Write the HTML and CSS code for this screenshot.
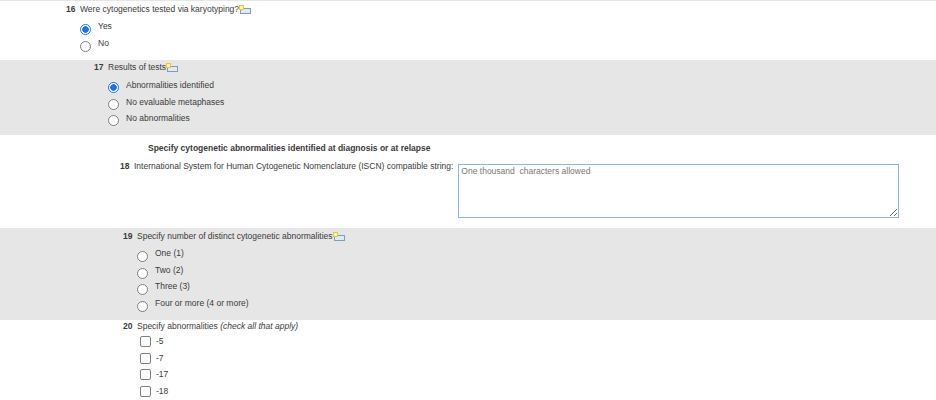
FILE: index.html
```html
<!DOCTYPE html>
<html lang="en">
<head>
    <meta charset="UTF-8">
    <title>Cytogenetics form</title>
    <link rel="stylesheet" href="styles.css">
</head>
<body>

    <!-- Question 16 -->
    <div class="block block-16">
        <div class="question">
            <span class="num">16</span>
            <span>Were cytogenetics tested via karyotyping?</span>
            <svg class="note" width="12" height="10" viewBox="0 0 12 10"><rect x="1.5" y="3.5" width="10" height="5" fill="#dfe9f7" stroke="#7f9db9"/><rect x="0.5" y="0.5" width="4" height="4" fill="#fff2a8" stroke="#e8c840"/></svg>
        </div>
        <div class="options">
            <label class="opt"><input type="radio" name="q16" checked><span>Yes</span></label>
            <label class="opt"><input type="radio" name="q16"><span>No</span></label>
        </div>
    </div>

    <!-- Question 17 -->
    <div class="block shaded block-17">
        <div class="question">
            <span class="num">17</span>
            <span>Results of tests</span>
            <svg class="note" width="12" height="10" viewBox="0 0 12 10"><rect x="1.5" y="3.5" width="10" height="5" fill="#dfe9f7" stroke="#7f9db9"/><rect x="0.5" y="0.5" width="4" height="4" fill="#fff2a8" stroke="#e8c840"/></svg>
        </div>
        <div class="options">
            <label class="opt"><input type="radio" name="q17" checked><span>Abnormalities identified</span></label>
            <label class="opt"><input type="radio" name="q17"><span>No evaluable metaphases</span></label>
            <label class="opt"><input type="radio" name="q17"><span>No abnormalities</span></label>
        </div>
    </div>

    <!-- Question 18 -->
    <div class="block block-18">
        <h4 class="subhead">Specify cytogenetic abnormalities identified at diagnosis or at relapse</h4>
        <div class="question">
            <span class="num">18</span>
            <span>International System for Human Cytogenetic Nomenclature (ISCN) compatible string:</span>
            <textarea class="iscn" placeholder="One thousand  characters allowed"></textarea>
        </div>
    </div>

    <!-- Question 19 -->
    <div class="block shaded block-19">
        <div class="question">
            <span class="num">19</span>
            <span>Specify number of distinct cytogenetic abnormalities</span>
            <svg class="note" width="12" height="10" viewBox="0 0 12 10"><rect x="1.5" y="3.5" width="10" height="5" fill="#dfe9f7" stroke="#7f9db9"/><rect x="0.5" y="0.5" width="4" height="4" fill="#fff2a8" stroke="#e8c840"/></svg>
        </div>
        <div class="options">
            <label class="opt"><input type="radio" name="q19"><span>One (1)</span></label>
            <label class="opt"><input type="radio" name="q19"><span>Two (2)</span></label>
            <label class="opt"><input type="radio" name="q19"><span>Three (3)</span></label>
            <label class="opt"><input type="radio" name="q19"><span>Four or more (4 or more)</span></label>
        </div>
    </div>

    <!-- Question 20 -->
    <div class="block block-20">
        <div class="question">
            <span class="num">20</span>
            <span>Specify abnormalities <em>(check all that apply)</em></span>
        </div>
        <div class="options">
            <label class="opt"><input type="checkbox"><span>-5</span></label>
            <label class="opt"><input type="checkbox"><span>-7</span></label>
            <label class="opt"><input type="checkbox"><span>-17</span></label>
            <label class="opt"><input type="checkbox"><span>-18</span></label>
        </div>
    </div>

</body>
</html>
```

FILE: styles.css
```css
/* General styles */
html, body {
    height: 400px;
    overflow: hidden;
}
body {
    font-family: 'Liberation Sans', Arial, sans-serif;
    font-size: 8.5px;
    line-height: 11px;
    margin: 0;
    padding: 0;
    background-color: #ffffff;
    color: #3a3a3a;
    border-top: 1px solid #e6e6e6;
}

/* Blocks */
.block {
    box-sizing: border-box;
}
.shaded {
    background-color: #e6e6e6;
}
.block-16 {
    height: 59px;
    padding: 2px 0 0 66px;
}
.block-17 {
    height: 75px;
    padding: 1px 0 0 94px;
}
.block-18 {
    height: 93px;
    padding: 7px 0 0 120px;
}
.block-19 {
    height: 92px;
    padding: 2px 0 0 123px;
}
.block-20 {
    padding: 1px 0 0 123px;
}
.block-16 .question,
.block-17 .question,
.block-19 .question {
    padding-top: 1px;
}

/* Question line */
.question {
    display: flex;
    align-items: flex-start;
}
.num {
    font-weight: bold;
    width: 14px;
    flex: none;
}
.note {
    margin-top: 1px;
    flex: none;
}
em {
    font-style: italic;
}

/* Options */
.options {
    margin-top: 6px;
    padding-left: 13px;
}
.opt {
    display: flex;
    height: 16.7px;
    align-items: flex-start;
}
.opt input {
    appearance: none;
    box-sizing: border-box;
    margin: 3px 0 0 1px;
    width: 11px;
    height: 11px;
    flex: none;
    background-color: #fff;
    border: 1px solid #808080;
}
.opt input[type="radio"] {
    border-radius: 50%;
}
.opt input[type="radio"]:checked {
    border-color: #1a73e8;
    background: radial-gradient(circle, #1a73e8 0 3px, #fff 3.5px);
}
.opt input[type="checkbox"] {
    border-radius: 2px;
}
.opt span {
    margin-left: 7px;
    margin-top: 1px;
}
.block-16 .opt span,
.block-19 .opt span {
    margin-top: 0;
}
.block-20 .options {
    margin-top: 3px;
    padding-left: 16px;
}
.block-20 .opt span {
    margin-left: 5px;
}
.block-20 .opt input {
    margin-top: 1px;
}

/* Section heading */
.subhead {
    font-size: 8.5px;
    line-height: 11px;
    font-weight: bold;
    margin: 1px 0 7px 28px;
}

/* ISCN text area */
.iscn {
    box-sizing: border-box;
    width: 441px;
    height: 54px;
    margin: 3px 0 0 5px;
    padding: 1px 2px;
    border: 1px solid #8fb3e0;
    outline: none;
    font-family: 'Liberation Sans', Arial, sans-serif;
    font-size: 8.5px;
    line-height: 11px;
    flex: none;
}
.iscn::placeholder {
    color: #777;
    opacity: 1;
}
```
